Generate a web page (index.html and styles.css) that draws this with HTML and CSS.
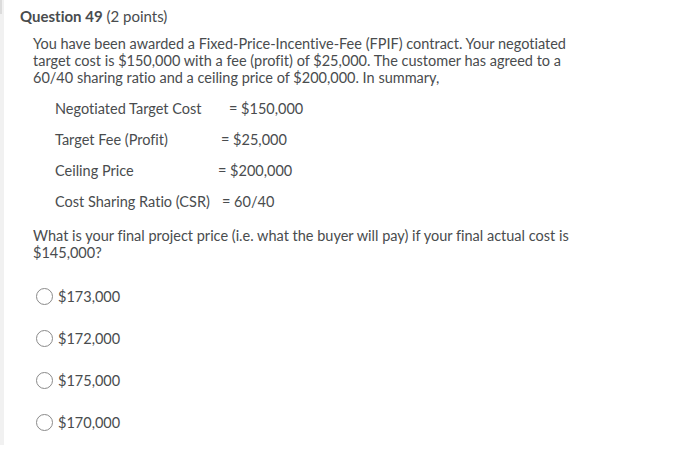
FILE: index.html
```html
<!DOCTYPE html>
<html>
<head>
<meta charset="utf-8">
<link rel="stylesheet" href="styles.css">
</head>
<body>
<div class="page">
  <div class="edge"><div class="edge-top"></div></div>
  <div class="content">
    <h1 class="title"><b>Question 49</b> (2 points)</h1>
    <div class="body">
      <p class="intro">You have been awarded a Fixed-Price-Incentive-Fee (FPIF) contract. Your negotiated target cost is $150,000 with a fee (profit) of $25,000. The customer has agreed to a 60/40 sharing ratio and a ceiling price of $200,000. In summary,</p>
      <div class="summary">
        <div class="row"><span class="label l1">Negotiated Target Cost</span><span>= $150,000</span></div>
        <div class="row"><span class="label l2">Target Fee (Profit)</span><span>= $25,000</span></div>
        <div class="row"><span class="label l3">Ceiling Price</span><span>= $200,000</span></div>
        <div class="row"><span class="label l4">Cost Sharing Ratio (CSR)</span><span>= 60/40</span></div>
      </div>
      <p class="question">What is your final project price (i.e. what the buyer will pay) if your final actual cost is $145,000?</p>
      <div class="options">
        <label class="opt"><span class="radio"></span>$173,000</label>
        <label class="opt"><span class="radio"></span>$172,000</label>
        <label class="opt"><span class="radio"></span>$175,000</label>
        <label class="opt"><span class="radio"></span>$170,000</label>
      </div>
    </div>
  </div>
</div>
</body>
</html>
```
FILE: styles.css
```css
html, body { margin: 0; padding: 0; background: #fff; }
body { font-family: Lato, "Open Sans", sans-serif; color: #494c4e; width: 678px; height: 450px; overflow: hidden; font-variant-ligatures: none; font-size: 14.5px; }
.page { display: flex; height: 445px; }
.edge { width: 4px; background: #f1f1f1; flex: none; }
.edge-top { height: 14px; background: #dcdcdc; width: 2px; }
.content { padding: 8px 0 0 16px; flex: 1; }
.title { margin: 0; font-size: 15px; font-weight: normal; line-height: 17px; }
.title b { font-weight: bold; }
.body { padding-left: 13px; }
.intro { margin: 10px 0 0; line-height: 17px; width: 560px; }
.summary { margin-top: 14px; padding-left: 22px; }
.row { line-height: 17px; height: 31px; display: flex; }
.label { display: inline-block; }
.l1 { width: 174px; }
.l2 { width: 166px; }
.l3 { width: 163px; }
.l4 { width: 167px; }
.question { margin: 3px 0 0; line-height: 17px; width: 560px; }
.options { margin-top: 14px; padding-left: 3px; }
.opt { display: flex; align-items: center; height: 42px; line-height: 17px; }
.radio { width: 17px; height: 17px; border: 1px solid #8a8a8a; border-radius: 50%; box-sizing: border-box; margin-right: 5px; background: #fff; }
```
